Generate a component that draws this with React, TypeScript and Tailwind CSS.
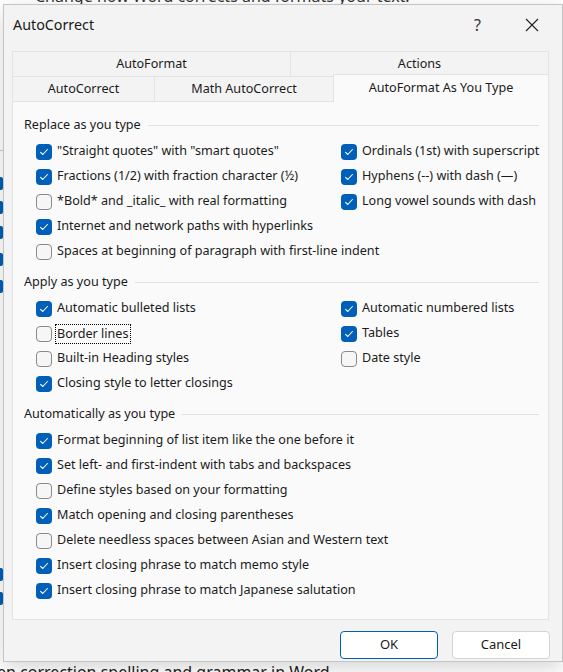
import React from 'react';

type Opt = { label: string; on: boolean; focus?: boolean };

const replaceLeft: Opt[] = [
  { label: '"Straight quotes" with "smart quotes"', on: true },
  { label: 'Fractions (1/2) with fraction character (½)', on: true },
  { label: '*Bold* and _italic_ with real formatting', on: false },
  { label: 'Internet and network paths with hyperlinks', on: true },
  { label: 'Spaces at beginning of paragraph with first-line indent', on: false },
];
const replaceRight: Opt[] = [
  { label: 'Ordinals (1st) with superscript', on: true },
  { label: 'Hyphens (--) with dash (—)', on: true },
  { label: 'Long vowel sounds with dash', on: true },
];
const applyLeft: Opt[] = [
  { label: 'Automatic bulleted lists', on: true },
  { label: 'Border lines', on: false, focus: true },
  { label: 'Built-in Heading styles', on: false },
  { label: 'Closing style to letter closings', on: true },
];
const applyRight: Opt[] = [
  { label: 'Automatic numbered lists', on: true },
  { label: 'Tables', on: true },
  { label: 'Date style', on: false },
];
const autoRows: Opt[] = [
  { label: 'Format beginning of list item like the one before it', on: true },
  { label: 'Set left- and first-indent with tabs and backspaces', on: true },
  { label: 'Define styles based on your formatting', on: false },
  { label: 'Match opening and closing parentheses', on: true },
  { label: 'Delete needless spaces between Asian and Western text', on: false },
  { label: 'Insert closing phrase to match memo style', on: true },
  { label: 'Insert closing phrase to match Japanese salutation', on: true },
];

function Box({ on }: { on: boolean }) {
  if (on) {
    return (
      <span className="flex h-4 w-4 shrink-0 items-center justify-center rounded-[4px] bg-[#005fb8]">
        <svg viewBox="0 0 16 16" className="h-4 w-4">
          <path d="M4.6 8.4l2.2 2.1 4.6-5" fill="none" stroke="white" strokeWidth="1.1" strokeLinecap="round" strokeLinejoin="round" />
        </svg>
      </span>
    );
  }
  return <span className="h-4 w-4 shrink-0 rounded-[4px] border border-[#8a8a8a] bg-[#f6f6f6]" />;
}

function Row({ opt }: { opt: Opt }) {
  return (
    <div className="flex h-[25px] items-center gap-[5px] whitespace-nowrap">
      <Box on={opt.on} />
      <span className={opt.focus ? 'outline outline-1 outline-dotted outline-black -ml-[1px] px-[1px] leading-[18px]' : ''}>
        {opt.label}
      </span>
    </div>
  );
}

function Header({ title }: { title: string }) {
  return (
    <div className="flex h-5 items-center gap-[7px] pr-[9px]">
      <span>{title}</span>
      <div className="h-px flex-1 bg-[#e0e0e0]" />
    </div>
  );
}

function Group({ title, left, right }: { title: string; left: Opt[]; right?: Opt[] }) {
  return (
    <div className="mb-2">
      <Header title={title} />
      {right ? (
        <div className="mt-1 grid grid-cols-[305px_1fr] pl-3">
          <div>
            {left.map((o) => (
              <Row key={o.label} opt={o} />
            ))}
          </div>
          <div>
            {right.map((o) => (
              <Row key={o.label} opt={o} />
            ))}
          </div>
        </div>
      ) : (
        <div className="mt-1 pl-3">
          {left.map((o) => (
            <Row key={o.label} opt={o} />
          ))}
        </div>
      )}
    </div>
  );
}

export default function App() {
  return (
    <div className="relative h-[672px] w-[563px] overflow-hidden bg-white font-['Segoe_UI','Noto_Sans',sans-serif] text-[12.6px] text-[#1b1b1b]">
      {/* Word options page behind the dialog */}
      <div className="absolute left-[35px] top-[-16px] text-[16px] text-[#333]">Change how Word corrects and formats your text.</div>
      <div className="absolute left-0 top-[150px] h-px w-[4px] bg-[#c8c8c8]" />
      {[177, 201, 226, 253, 280, 568, 592].map((y) => (
        <div key={y} className="absolute left-[-10px] h-[13px] w-[13px] rounded-[2px] bg-[#005fb8]" style={{ top: y }} />
      ))}
      <div className="absolute left-[-3px] top-[660px] text-[16px] text-[#222] underline">en correction spelling and grammar in Word</div>

      {/* dialog */}
      <div className="absolute left-[4px] top-[5px] flex h-[656px] w-[558px] flex-col bg-[#f3f3f3] shadow-[0_0_0_1px_#c4c4c4,0_6px_20px_rgba(0,0,0,0.18)]">
        <div className="flex h-[40px] items-center pl-[9px]">
          <span className="text-[14.3px] text-[#1a1a1a]">AutoCorrect</span>
          <span className="ml-auto mr-[44px] text-[16px] text-[#333]">?</span>
          <svg viewBox="0 0 14 14" className="mr-[23px] h-[14px] w-[14px]">
            <path d="M1 1l12 12M13 1L1 13" stroke="#222" strokeWidth="1.1" />
          </svg>
        </div>

        <div className="ml-[8px] mr-[13px] mt-[6px] flex flex-1 flex-col">
          <div className="flex h-[25px]">
            <div className="flex w-[279px] items-center justify-center border-l border-r border-t border-[#e3e3e3] bg-[#f3f3f3]">AutoFormat</div>
            <div className="flex flex-1 items-center justify-center border-r border-t border-[#e3e3e3] bg-[#f3f3f3]">Actions</div>
          </div>
          <div className="flex h-[25px] items-end">
            <div className="flex h-[25px] w-[143px] items-center justify-center border-l border-r border-t border-[#e3e3e3] bg-[#f3f3f3]">AutoCorrect</div>
            <div className="flex h-[25px] w-[178px] items-center justify-center border-t border-[#e3e3e3] bg-[#f3f3f3]">Math AutoCorrect</div>
            <div className="relative z-10 -mb-px flex h-[28px] flex-1 items-center justify-center border-l border-r border-t border-[#e3e3e3] bg-[#fafafa] pb-[1px]">AutoFormat As You Type</div>
          </div>
          <div className="h-[519px] border border-[#e3e3e3] bg-[#fafafa] pl-[11px] pt-[13px]">
            <Group title="Replace as you type" left={replaceLeft} right={replaceRight} />
            <Group title="Apply as you type" left={applyLeft} right={applyRight} />
            <Group title="Automatically as you type" left={autoRows} />
          </div>
          <div className="mt-[11px] flex justify-end gap-[14px]">
            <button className="h-[28px] w-[98px] rounded-[4px] border border-[#005fb8] bg-white text-[13px] text-[#1a1a1a]">OK</button>
            <button className="-mr-px h-[28px] w-[98px] rounded-[4px] border border-[#d4d4d4] bg-white text-[13px] text-[#1a1a1a]">Cancel</button>
          </div>
        </div>
      </div>
    </div>
  );
}
